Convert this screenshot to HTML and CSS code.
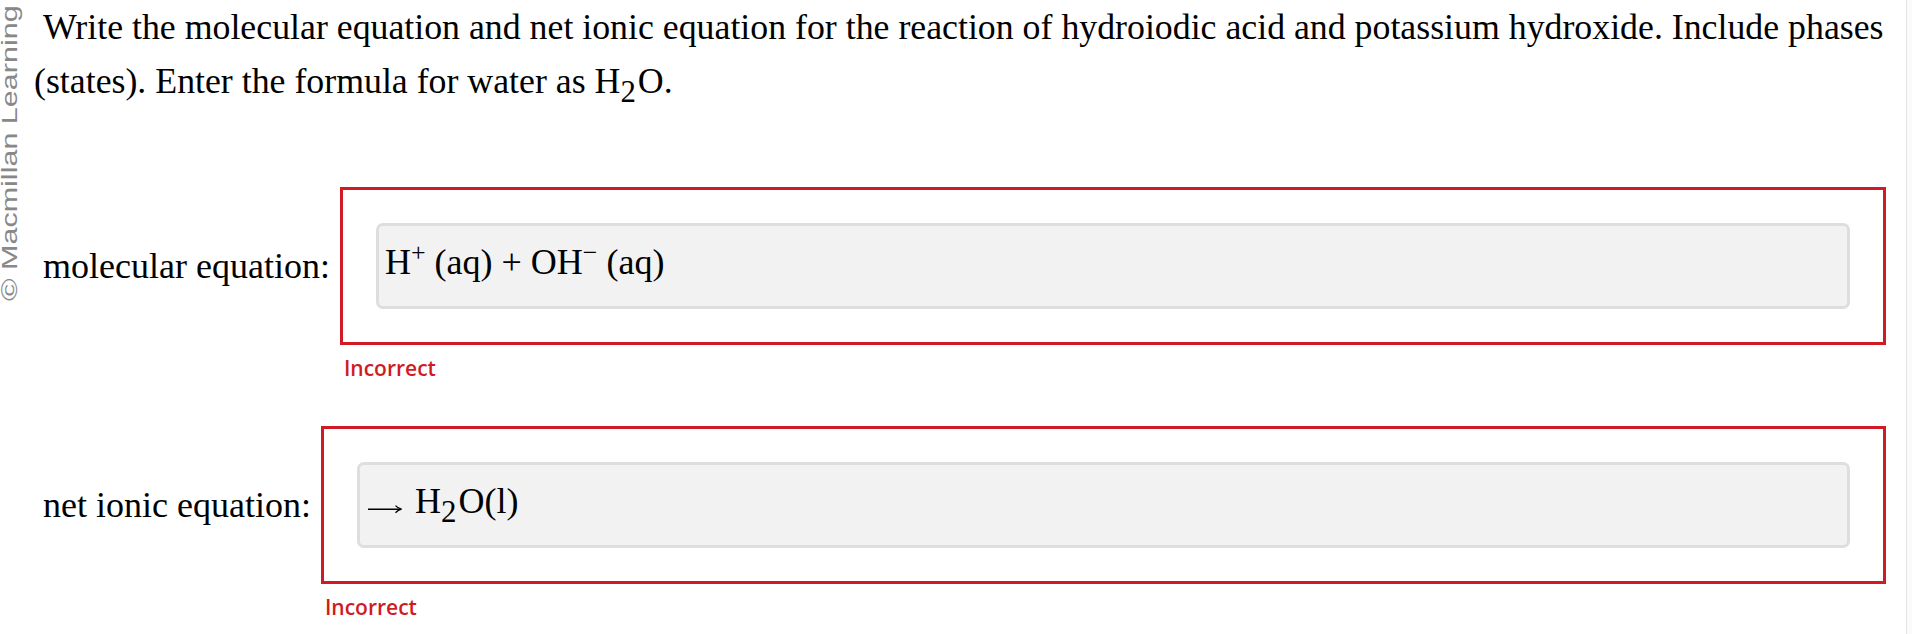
FILE: index.html
```html
<!DOCTYPE html>
<html lang="en">
<head>
<meta charset="utf-8">
<title>Molecular and net ionic equation</title>
<link rel="stylesheet" href="styles.css">
</head>
<body>
<div class="page">
  <div class="watermark">© Macmillan Learning</div>
  <main class="content">
    <p class="prompt">Write the molecular equation and net ionic equation for the reaction of hydroiodic acid and potassium hydroxide. Include phases (states). Enter the formula for water as <span class="formula">H<sub class="sub">2</sub>O</span>.</p>

    <div class="field">
      <span class="label">molecular equation:</span>
      <div class="frame">
        <div class="answer">H<sup class="sup">+</sup> (aq) + OH<sup class="sup">−</sup> (aq)</div>
      </div>
      <div class="feedback">Incorrect</div>
    </div>

    <div class="field">
      <span class="label">net ionic equation:</span>
      <div class="frame">
        <div class="answer"><svg class="arrow" viewBox="0 0 34 10" width="34" height="10" aria-hidden="true"><path d="M0 5.2H32.5" stroke="#000" stroke-width="1.5"/><path d="M27.5 1.6Q30 4.4 33.6 5.2Q30 6 27.5 8.8" fill="none" stroke="#000" stroke-width="1.3"/></svg> <span class="formula">H<sub class="sub">2</sub>O(l)</span></div>
      </div>
      <div class="feedback">Incorrect</div>
    </div>
  </main>
  <div class="track"></div>
</div>
</body>
</html>
```

FILE: styles.css
```css
html, body {
  margin: 0;
  padding: 0;
  background: #ffffff;
}

body {
  font-family: "Liberation Serif", "Times New Roman", serif;
  color: #000000;
}

.page {
  position: relative;
  display: flex;
  height: 634px;
  overflow: hidden;
}

.content {
  flex: 1;
  min-width: 0;
  padding-left: 34px;
}

.track {
  width: 5px;
  border-left: 1px solid #e4e4e4;
  background: #fafafa;
}

.watermark {
  position: absolute;
  left: 0;
  top: 301px;
  transform-origin: 0 0;
  transform: rotate(-90deg) scaleX(1.42);
  font-family: "Liberation Sans", Arial, sans-serif;
  font-size: 21.5px;
  line-height: 20px;
  color: #888888;
  white-space: nowrap;
}

.prompt {
  margin: 0 6px 79px 0;
  font-size: 35.8px;
  line-height: 54px;
  text-indent: 9px;
}

.formula {
  white-space: nowrap;
}

.sub {
  font-size: 0.86em;
  vertical-align: -0.3em;
  line-height: 0;
  margin-right: 2px;
}

.sup {
  font-size: 0.72em;
  vertical-align: 0.5em;
  line-height: 0;
}

.field {
  display: grid;
  grid-template-columns: auto 1fr;
  column-gap: 10px;
  margin: 0 20px 0 9px;
}

.field + .field {
  margin-top: 44px;
}

.label {
  grid-row: 1;
  grid-column: 1;
  align-self: center;
  font-size: 36px;
}

.frame {
  grid-row: 1;
  grid-column: 2;
  border: 3px solid #d01a24;
  padding: 33px;
}

.answer {
  height: 80px;
  padding: 0 6px;
  border: 3px solid #dedede;
  border-radius: 7px;
  background: #f2f2f2;
  font-size: 36px;
  line-height: 72px;
  white-space: nowrap;
}

.arrow {
  margin-left: 2px;
  margin-right: 4px;
  vertical-align: -1px;
}

.feedback {
  grid-row: 2;
  grid-column: 2;
  margin: 9px 0 0 4px;
  font-family: "Open Sans", "Liberation Sans", sans-serif;
  font-weight: 600;
  font-size: 21px;
  line-height: 28px;
  color: #d01a24;
}
```
